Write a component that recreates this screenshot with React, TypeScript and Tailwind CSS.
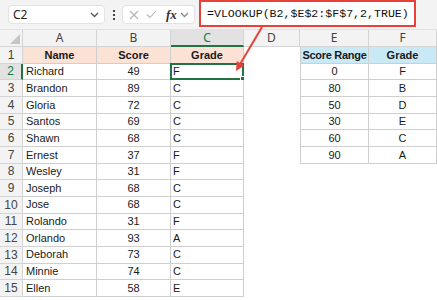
const people: [string, number, string][] = [
  ["Richard", 49, "F"],
  ["Brandon", 89, "C"],
  ["Gloria", 72, "C"],
  ["Santos", 69, "C"],
  ["Shawn", 68, "C"],
  ["Ernest", 37, "F"],
  ["Wesley", 31, "F"],
  ["Joseph", 68, "C"],
  ["Jose", 68, "C"],
  ["Rolando", 31, "F"],
  ["Orlando", 93, "A"],
  ["Deborah", 73, "C"],
  ["Minnie", 74, "C"],
  ["Ellen", 58, "E"],
];

const lookup: [number, string][] = [
  [0, "F"],
  [80, "B"],
  [50, "D"],
  [30, "E"],
  [60, "C"],
  [90, "A"],
];

const cell = "flex h-full shrink-0 items-center whitespace-nowrap border-b border-r border-[#cfcfcf]";

function Chevron({ color = "#555" }: { color?: string }) {
  return (
    <svg width="9" height="6" viewBox="0 0 9 6" fill="none">
      <polyline points="1,1 4.5,4.5 8,1" stroke={color} strokeWidth="1.3" />
    </svg>
  );
}

function Toolbar() {
  return (
    <div className="flex h-[29px] items-start bg-[#f3f3f3]">
      <div className="ml-[8px] mt-[5px] flex h-[19px] w-[97px] items-center justify-between rounded-[4px] border border-[#e3e3e3] bg-white pl-[4px] pr-[5px] text-[12px] text-[#222]">
        <span>C2</span>
        <Chevron />
      </div>
      <div className="mt-[10px] flex w-[17px] flex-col items-center gap-[2px]">
        <span className="h-[2px] w-[2px] bg-[#444]" />
        <span className="h-[2px] w-[2px] bg-[#444]" />
        <span className="h-[2px] w-[2px] bg-[#444]" />
      </div>
      <div className="mt-[5px] flex h-[19px] w-[73px] items-center rounded-[4px] border border-[#e3e3e3] bg-white pl-[6px] pr-[3px]">
        <svg width="10" height="10" viewBox="0 0 10 10" fill="none">
          <path d="M1 1 L9 9 M9 1 L1 9" stroke="#b4b4b4" strokeWidth="1.1" />
        </svg>
        <svg className="ml-[7px]" width="11" height="9" viewBox="0 0 11 9" fill="none">
          <polyline points="1,4.5 4,7.5 10,1" stroke="#b4b4b4" strokeWidth="1.1" />
        </svg>
        <span className="ml-[9px] font-['Liberation_Serif',serif] text-[13px] font-bold italic leading-none text-[#333]">
          fx
        </span>
        <span className="ml-[3px]">
          <Chevron color="#888" />
        </span>
      </div>
      <div className="ml-[4px] flex h-[27px] w-[217px] items-center border-2 border-[#e8413a] bg-white pl-[6px] font-['Liberation_Mono',monospace] text-[11.6px] text-[#111]">
        =VLOOKUP(B2,$E$2:$F$7,2,TRUE)
      </div>
    </div>
  );
}

function ColumnHeaders() {
  const cols: [string, string][] = [
    ["A", "w-[74px]"],
    ["B", "w-[74px]"],
    ["C", "w-[73px]"],
    ["D", "w-[56px]"],
    ["E", "w-[69px]"],
    ["F", "w-[68px]"],
  ];
  return (
    <div className="flex h-[18px] border-t border-[#e2e2e2] bg-[#f3f3f3] text-[12px] text-[#444]">
      <div className="relative w-[23px] shrink-0 border-b border-r border-[#d4d4d4]">
        <svg className="absolute bottom-[2px] right-[2px]" width="10" height="10" viewBox="0 0 10 10">
          <polygon points="10,0 10,10 0,10" fill="#c6c6c6" />
        </svg>
      </div>
      {cols.map(([name, w]) =>
        name === "C" ? (
          <div
            key={name}
            className={`${w} flex shrink-0 items-center justify-center border-b-2 border-r border-b-[#217346] border-r-[#d4d4d4] bg-[#e2e2e2] text-[#107c41]`}
          >
            {name}
          </div>
        ) : (
          <div
            key={name}
            className={`${w} flex shrink-0 items-center justify-center border-b border-r border-[#d4d4d4]`}
          >
            {name}
          </div>
        )
      )}
    </div>
  );
}

function RowNumber({ n, selected }: { n: number; selected?: boolean }) {
  return (
    <div
      className={`flex h-full w-[23px] shrink-0 items-center justify-center border-b text-[12px] ${
        selected
          ? "border-r-2 border-b-[#d4d4d4] border-r-[#217346] bg-[#e2e2e2] text-[#107c41]"
          : "border-r border-[#d4d4d4] bg-[#f3f3f3] text-[#444]"
      }`}
    >
      {n}
    </div>
  );
}

function LookupCells({ index }: { index: number }) {
  if (index === 0) {
    return (
      <>
        <div className={`${cell} w-[69px] justify-center border-l bg-[#c9e9f7] font-bold tracking-[-0.3px]`}>
          Score Range
        </div>
        <div className={`${cell} w-[68px] justify-center bg-[#c9e9f7] font-bold`}>Grade</div>
      </>
    );
  }
  const row = lookup[index - 1];
  if (!row) return null;
  return (
    <>
      <div className={`${cell} w-[69px] justify-center border-l`}>{row[0]}</div>
      <div className={`${cell} w-[68px] justify-center`}>{row[1]}</div>
    </>
  );
}

function Sheet() {
  return (
    <div className="font-['Liberation_Sans',Arial,sans-serif] text-[11px] text-[#1a1a1a]">
      <div className="flex h-[16.67px]">
        <RowNumber n={1} />
        <div className={`${cell} w-[74px] justify-center bg-[#fbe2d5] font-bold`}>Name</div>
        <div className={`${cell} w-[74px] justify-center bg-[#fbe2d5] font-bold`}>Score</div>
        <div className={`${cell} w-[73px] justify-center bg-[#fbe2d5] font-bold`}>Grade</div>
        <div className="w-[56px] shrink-0" />
        <LookupCells index={0} />
      </div>
      {people.map(([name, score, grade], i) => (
        <div key={name} className="flex h-[16.67px]">
          <RowNumber n={i + 2} selected={i === 0} />
          <div className={`${cell} w-[74px] pl-[3px]`}>{name}</div>
          <div className={`${cell} w-[74px] justify-center`}>{score}</div>
          <div className={`${cell} relative w-[73px] pl-[2px]`}>
            {grade}
            {i === 0 && (
              <div className="absolute -left-px -top-px bottom-[-1px] right-[-1px] border-2 border-[#217346]">
                <span className="absolute -bottom-[3px] -right-[3px] h-[5px] w-[5px] border border-white bg-[#217346]" />
              </div>
            )}
          </div>
          <div className="w-[56px] shrink-0" />
          <LookupCells index={i + 1} />
        </div>
      ))}
    </div>
  );
}

export default function App() {
  return (
    <div className="relative h-[300px] w-[437px] overflow-hidden bg-white">
      <Toolbar />
      <ColumnHeaders />
      <Sheet />
      {/* annotation arrow from the formula to C2 */}
      <svg className="pointer-events-none absolute left-0 top-0" width="437" height="300">
        <line x1="262" y1="27" x2="240.6" y2="63.2" stroke="#e8413a" strokeWidth="2" />
        <polygon points="236,71 244.5,65.5 236.7,60.9" fill="#e8413a" />
      </svg>
    </div>
  );
}
